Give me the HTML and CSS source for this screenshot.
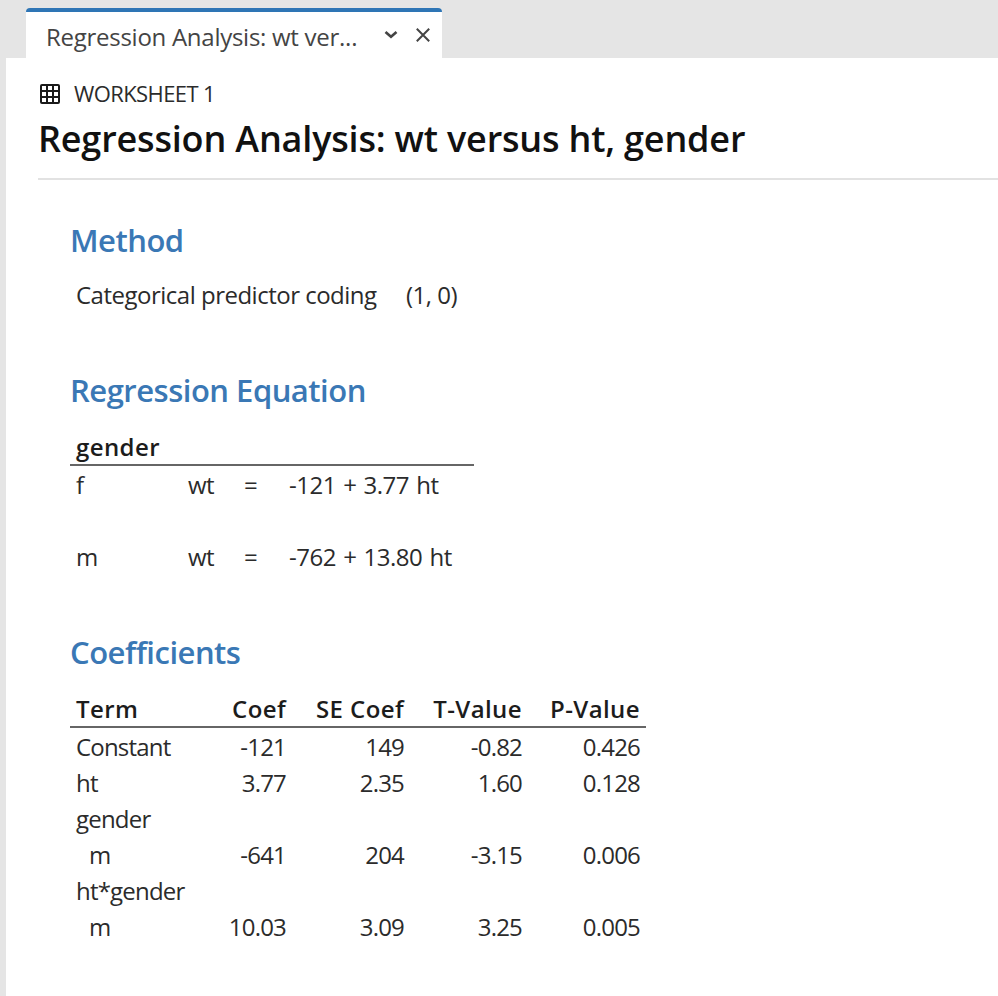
FILE: index.html
```html
<!DOCTYPE html>
<html lang="en">
<head>
    <meta charset="UTF-8">
    <meta name="viewport" content="width=device-width, initial-scale=1.0">
    <title>Regression Analysis: wt versus ht, gender</title>
    <link rel="stylesheet" href="styles.css">
</head>
<body>
    <div class="tab-bar">
        <div class="tab">
            <span class="tab-title">Regression Analysis: wt ver...</span>
            <svg class="icon-chevron" width="16" height="16" viewBox="0 0 16 16">
                <path d="M2.5 5 L8 9.8 L13.5 5" />
            </svg>
            <svg class="icon-close" width="16" height="16" viewBox="0 0 16 16">
                <path d="M1.8 1.8 L14.2 14.2 M14.2 1.8 L1.8 14.2" />
            </svg>
        </div>
    </div>

    <div class="output">
        <div class="worksheet">
            <svg class="icon-grid" width="20" height="20" viewBox="0 0 20 20">
                <rect x="1" y="1" width="18" height="18" rx="1" />
                <path d="M7 1 V19 M13 1 V19 M1 7 H19 M1 13 H19" />
            </svg>
            <span>WORKSHEET 1</span>
        </div>
        <h1>Regression Analysis: wt versus ht, gender</h1>

        <h2 class="method-title">Method</h2>
        <div class="method-row">
            <span class="method-label">Categorical predictor coding</span>
            <span class="method-value">(1, 0)</span>
        </div>

        <h2 class="equation-title">Regression Equation</h2>
        <table class="equation">
            <thead>
                <tr><th class="col-gender">gender</th><th class="col-wt"></th><th class="col-eq"></th><th></th></tr>
            </thead>
            <tbody>
                <tr><td>f</td><td>wt</td><td>=</td><td>-121 + 3.77 ht</td></tr>
                <tr><td colspan="4"></td></tr>
                <tr><td>m</td><td>wt</td><td>=</td><td>-762 + 13.80 ht</td></tr>
            </tbody>
        </table>

        <h2 class="coef-title">Coefficients</h2>
        <table class="coefficients">
            <thead>
                <tr>
                    <th class="col-term">Term</th>
                    <th class="col-coef">Coef</th>
                    <th class="col-se">SE Coef</th>
                    <th class="col-t">T-Value</th>
                    <th class="col-p">P-Value</th>
                </tr>
            </thead>
            <tbody>
                <tr><td>Constant</td><td>-121</td><td>149</td><td>-0.82</td><td>0.426</td></tr>
                <tr><td>ht</td><td>3.77</td><td>2.35</td><td>1.60</td><td>0.128</td></tr>
                <tr><td>gender</td><td></td><td></td><td></td><td></td></tr>
                <tr><td class="level">m</td><td>-641</td><td>204</td><td>-3.15</td><td>0.006</td></tr>
                <tr><td>ht*gender</td><td></td><td></td><td></td><td></td></tr>
                <tr><td class="level">m</td><td>10.03</td><td>3.09</td><td>3.25</td><td>0.005</td></tr>
            </tbody>
        </table>
    </div>
</body>
</html>
```
FILE: styles.css
```css
* {
    margin: 0;
    padding: 0;
    box-sizing: border-box;
}
body {
    height: 996px;
    overflow: hidden;
    background-color: #e5e5e5;
    color: #2b2b2b;
    font-family: "Open Sans", "Noto Sans", sans-serif;
    font-size: 24px;
    line-height: 36px;
}
.tab-bar {
    height: 58px;
    padding: 8px 0 0 26px;
}
.tab {
    display: flex;
    align-items: flex-start;
    width: 416px;
    height: 50px;
    padding: 0 11px 0 20px;
    background-color: #fff;
    border-top: 4px solid #2e75b5;
    border-radius: 4px 4px 0 0;
}
.tab-title {
    width: 337px;
    margin-top: 7px;
    color: #444;
    white-space: nowrap;
    letter-spacing: -0.27px;
}
.tab svg {
    flex: none;
    margin-top: 15px;
    fill: none;
    stroke: #444;
    stroke-width: 2;
}
.tab .icon-chevron {
    stroke-width: 2.6;
}
.tab .icon-close {
    margin-left: 16px;
}
.output {
    height: 938px;
    margin-left: 6px;
    padding: 18px 0 0 32px;
    background-color: #fff;
}
.worksheet {
    display: flex;
    align-items: center;
    height: 36px;
    font-size: 22px;
    line-height: 34px;
    white-space: nowrap;
    letter-spacing: -0.6px;
}
.worksheet span {
    padding-bottom: 2px;
}
.icon-grid {
    margin: 0 14px 0 2px;
    fill: none;
    stroke: #1a1a1a;
    stroke-width: 2;
}
h1 {
    height: 68px;
    padding-top: 2px;
    border-bottom: 2px solid #e2e2e2;
    color: #111;
    font-size: 36px;
    font-weight: 600;
    line-height: 50px;
    white-space: nowrap;
    letter-spacing: -0.18px;
}
h2 {
    height: 40px;
    margin-left: 32px;
    color: #3a78b5;
    font-size: 31px;
    font-weight: 600;
    line-height: 40px;
    letter-spacing: -0.5px;
}
.method-title {
    margin-top: 40px;
}
.method-row {
    display: flex;
    height: 36px;
    margin: 17px 0 0 38px;
    white-space: nowrap;
    letter-spacing: -0.5px;
}
.method-label {
    width: 330px;
}
.equation-title {
    margin-top: 57px;
}
table {
    margin-left: 32px;
    border-collapse: separate;
    border-spacing: 0;
    table-layout: fixed;
    line-height: 34px;
    white-space: nowrap;
}
th {
    height: 38px;
    padding: 2px 6px 0;
    border-bottom: 2px solid #666;
    color: #1c1c1c;
    font-weight: 600;
    text-align: left;
    letter-spacing: 0.4px;
}
td {
    height: 36px;
    padding: 2px 6px 0;
    letter-spacing: -0.8px;
}
.equation {
    width: 404px;
    margin-top: 18px;
}
.equation td {
    letter-spacing: -0.5px;
    word-spacing: 1.5px;
}
.equation .col-gender {
    width: 112px;
}
.equation .col-wt {
    width: 56px;
}
.equation .col-eq {
    width: 45px;
}
.coef-title {
    margin-top: 58px;
}
.coefficients {
    width: 576px;
    margin-top: 18px;
}
.coefficients .col-term {
    width: 138px;
}
.coefficients .col-coef {
    width: 84px;
}
.coefficients .col-se {
    width: 118px;
}
.coefficients .col-t {
    width: 118px;
}
.coefficients th:not(:first-child),
.coefficients td:not(:first-child) {
    text-align: right;
}
.coefficients .level {
    padding-left: 19px;
}
```
